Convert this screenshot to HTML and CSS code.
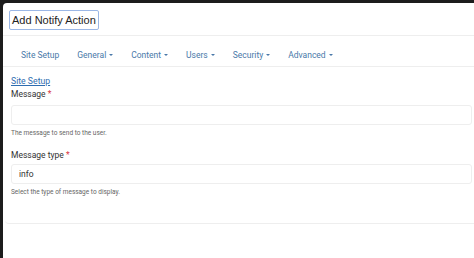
FILE: index.html
```html
<!DOCTYPE html>
<html lang="en">
<head>
  <meta charset="UTF-8">
  <title>Add Notify Action</title>
  <link rel="stylesheet" href="styles.css">
</head>
<body>

<div class="panel">
  <div class="header">
    <span class="title">Add Notify Action</span>
  </div>

  <!-- Menu -->
  <nav class="menu">
    <a class="menu-link">Site Setup</a>
    <a class="menu-link">General<span class="caret"></span></a>
    <a class="menu-link">Content<span class="caret"></span></a>
    <a class="menu-link">Users<span class="caret"></span></a>
    <a class="menu-link">Security<span class="caret"></span></a>
    <a class="menu-link">Advanced<span class="caret"></span></a>
  </nav>

  <!-- Form -->
  <div class="form-card">
    <a class="crumb" href="#">Site Setup</a>

    <label class="field-label">Message <span class="req">*</span></label>
    <div class="field-box"></div>
    <div class="field-help">The message to send to the user.</div>

    <label class="field-label second">Message type <span class="req">*</span></label>
    <div class="field-box select">info</div>
    <div class="field-help">Select the type of message to display.</div>
  </div>
</div>

</body>
</html>
```

FILE: styles.css
```css
html, body {
  height: 100%;
}
body {
  margin: 0;
  background-color: #1c1c1c;
  font-family: Roboto, "Liberation Sans", Arial, sans-serif;
  overflow: hidden;
}
.panel {
  margin: 3px 0 0 3px;
  height: 100%;
  background-color: #ffffff;
  border-top-left-radius: 4px;
}
.header {
  height: 26px;
  padding: 6px 0 0 6px;
  border-bottom: 1px solid #eeeeee;
}
.title {
  display: inline-block;
  box-sizing: border-box;
  height: 20px;
  line-height: 18px;
  padding: 0 2px 0 2px;
  border: 1px solid #9bb7e6;
  border-radius: 2px;
  font-family: "Liberation Sans", Arial, sans-serif;
  font-size: 11px;
  color: #222222;
}
.menu {
  display: flex;
  gap: 18px;
  height: 12px;
  padding: 13px 0 5px 18px;
  border-bottom: 1px solid #eeeeee;
  line-height: 12px;
  font-size: 8.5px;
}
.menu-link {
  color: #4a79a9;
  cursor: pointer;
}
.caret {
  display: inline-block;
  margin-left: 3px;
  vertical-align: 2px;
  border-top: 2.5px solid #4a79a9;
  border-left: 2.5px solid transparent;
  border-right: 2.5px solid transparent;
}
.form-card {
  margin-left: 2px;
  padding: 8px 2px 26px 6px;
  border-bottom: 1px solid #eeeeee;
  border-bottom-left-radius: 4px;
}
.crumb {
  display: block;
  line-height: 12px;
  font-size: 8.7px;
  color: #2f6db0;
  text-decoration: underline;
}
.field-label {
  display: block;
  margin-top: 1px;
  line-height: 12px;
  font-size: 8.5px;
  color: #333333;
}
.field-label.second {
  margin-top: 11px;
}
.req {
  color: #d9363e;
}
.field-box {
  box-sizing: border-box;
  height: 20px;
  margin-top: 5px;
  padding-left: 7px;
  border: 1px solid #eeeeee;
  border-radius: 3px;
  line-height: 18px;
  font-size: 8.5px;
  color: #333333;
}
.field-box.select {
  margin-top: 3px;
}
.field-help {
  margin-top: 3px;
  line-height: 10px;
  font-size: 6.5px;
  color: #666666;
}
```
